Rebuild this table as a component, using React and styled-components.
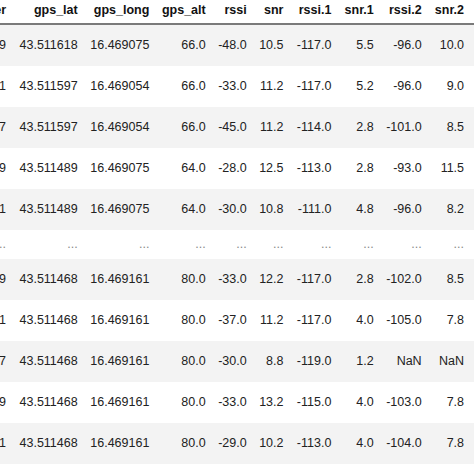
import styled, { createGlobalStyle } from "styled-components";

const GlobalStyle = createGlobalStyle`
  html, body {
    margin: 0;
    padding: 0;
    background: #ffffff;
  }

  body {
    font-family: "Liberation Sans", Arial, sans-serif;
    font-size: 12.5px;
    color: #222;
  }
`;

const columns = [
  { key: "counter", width: 12.25 },
  { key: "gps_lat", width: 71.7 },
  { key: "gps_long", width: 71.7 },
  { key: "gps_alt", width: 56.3 },
  { key: "rssi", width: 41 },
  { key: "snr", width: 36.8 },
  { key: "rssi.1", width: 47.9 },
  { key: "snr.1", width: 42.4 },
  { key: "rssi.2", width: 47.9 },
  { key: "snr.2", width: 42.4 },
];

const template = columns.map((c) => `${c.width}px`).join(" ");

const headRows = [
  ["4219", "43.511618", "16.469075", "66.0", "-48.0", "10.5", "-117.0", "5.5", "-96.0", "10.0"],
  ["4221", "43.511597", "16.469054", "66.0", "-33.0", "11.2", "-117.0", "5.2", "-96.0", "9.0"],
  ["4227", "43.511597", "16.469054", "66.0", "-45.0", "11.2", "-114.0", "2.8", "-101.0", "8.5"],
  ["4229", "43.511489", "16.469075", "64.0", "-28.0", "12.5", "-113.0", "2.8", "-93.0", "11.5"],
  ["4231", "43.511489", "16.469075", "64.0", "-30.0", "10.8", "-111.0", "4.8", "-96.0", "8.2"],
];

const tailRows = [
  ["9879", "43.511468", "16.469161", "80.0", "-33.0", "12.2", "-117.0", "2.8", "-102.0", "8.5"],
  ["9881", "43.511468", "16.469161", "80.0", "-37.0", "11.2", "-117.0", "4.0", "-105.0", "7.8"],
  ["9887", "43.511468", "16.469161", "80.0", "-30.0", "8.8", "-119.0", "1.2", "NaN", "NaN"],
  ["9889", "43.511468", "16.469161", "80.0", "-33.0", "13.2", "-115.0", "4.0", "-103.0", "7.8"],
  ["9891", "43.511468", "16.469161", "80.0", "-29.0", "10.2", "-113.0", "4.0", "-104.0", "7.8"],
];

const Frame = styled.div`
  display: flex;
  flex-direction: column;
  width: 474px;
  height: 474px;
  overflow: hidden;
`;

const HeaderRow = styled.div`
  display: grid;
  grid-template-columns: ${template};
  height: 23px;
  border-bottom: 2px solid #7a7a7a;
  font-weight: bold;
  color: #111;
`;

const Row = styled.div`
  display: grid;
  grid-template-columns: ${template};
  height: ${(p) => (p.$dots ? 29 : 41)}px;
  background: ${(p) => (p.$striped ? "#f3f3f3" : "#ffffff")};
  color: ${(p) => (p.$dots ? "#8a8a8a" : "inherit")};
`;

const Cell = styled.div`
  display: flex;
  justify-content: flex-end;
  align-items: ${(p) => (p.$head ? "flex-end" : "center")};
  padding: ${(p) => (p.$head ? "0 6.25px 5px" : "0 6.25px")};
  padding-left: ${(p) => (p.$clip ? 0 : "6.25px")};
  overflow: ${(p) => (p.$clip ? "hidden" : "visible")};
  white-space: nowrap;
  line-height: 15px;

  span {
    flex-shrink: 0;
  }
`;

const DataRow = ({ values, striped }) => (
  <Row $striped={striped}>
    {values.map((v, i) => (
      <Cell key={columns[i].key} $clip={i === 0}>
        <span>{v}</span>
      </Cell>
    ))}
  </Row>
);

export default function App() {
  return (
    <>
      <GlobalStyle />
      <Frame>
        <HeaderRow>
          {columns.map((c, i) => (
            <Cell key={c.key} $head $clip={i === 0}>
              <span>{c.key}</span>
            </Cell>
          ))}
        </HeaderRow>
        {headRows.map((r, i) => (
          <DataRow key={`h${i}`} values={r} striped={i % 2 === 0} />
        ))}
        <Row $dots>
          {columns.map((c, i) => (
            <Cell key={c.key} $clip={i === 0}>
              <span>...</span>
            </Cell>
          ))}
        </Row>
        {tailRows.map((r, i) => (
          <DataRow key={`t${i}`} values={r} striped={i % 2 === 0} />
        ))}
      </Frame>
    </>
  );
}
